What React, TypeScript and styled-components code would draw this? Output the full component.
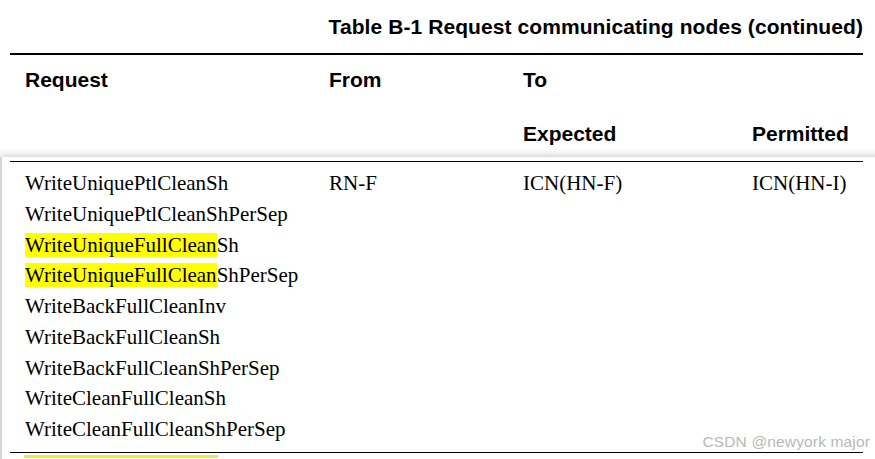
import React from 'react';
import styled, { createGlobalStyle } from 'styled-components';

const GlobalStyle = createGlobalStyle`
  html, body {
    margin: 0;
    padding: 0;
    background: #ffffff;
  }
`;

const SPage = styled.div`
  position: relative;
  width: 875px;
  height: 459px;
  overflow: hidden;
  background: #ffffff;
  color: #000000;
`;

const STopSheet = styled.div`
  padding: 0 12px 0 10px;
`;

const SCaption = styled.h2`
  margin: 0;
  height: 53px;
  display: flex;
  align-items: center;
  justify-content: flex-end;
  font-family: 'Liberation Sans', Arial, sans-serif;
  font-size: 21px;
  font-weight: 700;
  line-height: 24px;
  letter-spacing: 0.08px;
  padding-top: 1px;
  box-sizing: border-box;
`;

const SRule = styled.div<{ $weight: number }>`
  height: ${(p) => p.$weight}px;
  background: #000000;
`;

const SColumns = styled.div`
  display: grid;
  grid-template-columns: 304px 194px 229px 1fr;
  padding-left: 15px;
`;

const SHeadGrid = styled(SColumns)`
  row-gap: 30px;
  padding-top: 13px;
  padding-bottom: 11px;
  font-family: 'Liberation Sans', Arial, sans-serif;
  font-size: 21px;
  font-weight: 700;
  line-height: 24px;
`;

const SHeadCell = styled.div<{ $col: number; $row: number }>`
  grid-column: ${(p) => p.$col};
  grid-row: ${(p) => p.$row};
`;

const SSheet = styled.div`
  position: relative;
  margin-right: -20px;
  border-left: 2px solid #d6d6d6;
  background: #ffffff;
  box-shadow: 0 0 9px rgba(0, 0, 0, 0.28);
  padding: 4px 32px 1px 8px;
`;

const SBodyGrid = styled(SColumns)`
  padding-top: 6px;
  padding-bottom: 7px;
  font-family: 'Liberation Serif', 'Times New Roman', serif;
  font-size: 21px;
  line-height: 30.75px;
`;

const SCell = styled.div``;

const SMark = styled.span`
  background: #ffff00;
`;

/* top edge of the next highlighted row, cut off by the page edge */
const SPeek = styled.div`
  width: 194px;
  height: 3px;
  margin: 2px 0 0 14px;
  background: #e8e84a;
`;

const SWatermark = styled.div`
  position: absolute;
  right: 5px;
  top: 433px;
  font-family: 'Liberation Sans', Arial, sans-serif;
  font-size: 15.5px;
  line-height: 18px;
  letter-spacing: 0.15px;
  color: #b8b8b8;
`;

const requests: { text: string; mark?: string }[] = [
  { text: 'WriteUniquePtlCleanSh' },
  { text: 'WriteUniquePtlCleanShPerSep' },
  { text: 'Sh', mark: 'WriteUniqueFullClean' },
  { text: 'ShPerSep', mark: 'WriteUniqueFullClean' },
  { text: 'WriteBackFullCleanInv' },
  { text: 'WriteBackFullCleanSh' },
  { text: 'WriteBackFullCleanShPerSep' },
  { text: 'WriteCleanFullCleanSh' },
  { text: 'WriteCleanFullCleanShPerSep' },
];

export default function App() {
  return (
    <>
      <GlobalStyle />
      <SPage>
        <STopSheet>
          <SCaption>Table B-1 Request communicating nodes (continued)</SCaption>
          <SRule $weight={2} />
          <SHeadGrid>
            <SHeadCell $col={1} $row={1}>Request</SHeadCell>
            <SHeadCell $col={2} $row={1}>From</SHeadCell>
            <SHeadCell $col={3} $row={1}>To</SHeadCell>
            <SHeadCell $col={3} $row={2}>Expected</SHeadCell>
            <SHeadCell $col={4} $row={2}>Permitted</SHeadCell>
          </SHeadGrid>
        </STopSheet>
        <SSheet>
          <SRule $weight={1} />
          <SBodyGrid>
            <SCell>
              {requests.map((r, i) => (
                <div key={i}>
                  {r.mark && <SMark>{r.mark}</SMark>}
                  {r.text}
                </div>
              ))}
            </SCell>
            <SCell>RN-F</SCell>
            <SCell>ICN(HN-F)</SCell>
            <SCell>ICN(HN-I)</SCell>
          </SBodyGrid>
          <SRule $weight={1} />
          <SPeek />
        </SSheet>
        <SWatermark>CSDN @newyork major</SWatermark>
      </SPage>
    </>
  );
}
